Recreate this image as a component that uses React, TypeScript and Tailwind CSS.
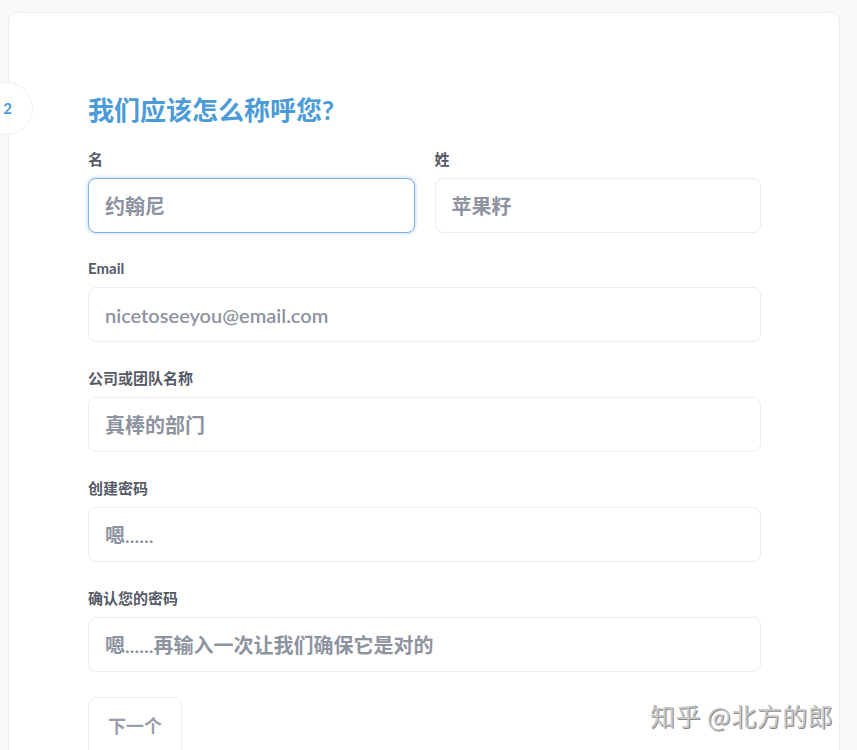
import React from "react";

const font = { fontFamily: 'Lato, "Noto Sans CJK SC", "Noto Sans", sans-serif' };

function Field({ label, placeholder, focused = false }: { label: string; placeholder: string; focused?: boolean }) {
  return (
    <div className="flex flex-col gap-[9px]">
      <label className="text-[15px] leading-[20px] font-bold text-[#555a66]">{label}</label>
      <div
        className={
          "h-[55px] rounded-[8px] bg-white flex items-center px-[16px] " +
          (focused
            ? "border-[1.5px] border-[#7db2e6] shadow-[0_0_4px_rgba(74,151,217,0.45)]"
            : "border border-[#ebedf0]")
        }
      >
        <span className="text-[20px] font-semibold text-[#8e93a0]">{placeholder}</span>
      </div>
    </div>
  );
}

export default function App() {
  return (
    <div className="relative h-[750px] w-[857px] overflow-hidden bg-[#f7f8fa]" style={font}>
      <div className="relative ml-[8px] mt-[12px] w-[832px] h-[760px] rounded-t-[10px] border border-[#eceef1] bg-white">
        <div className="absolute left-[-29px] top-[69px] w-[53px] h-[53px] rounded-full border border-[#eceef1] bg-white flex items-center justify-center pl-[2px]">
          <span className="text-[15px] font-bold text-[#4b9bd8]">2</span>
        </div>
        <div className="pl-[79px] pr-[78px] pt-[81px] flex flex-col">
          <h1 className="text-[26px] leading-[32px] font-bold text-[#4b9bd8]">我们应该怎么称呼您?</h1>
          <div className="mt-[23px] grid grid-cols-2 gap-[20px]">
            <Field label="名" placeholder="约翰尼" focused />
            <Field label="姓" placeholder="苹果籽" />
          </div>
          <div className="mt-[25px] flex flex-col gap-[26px]">
            <Field label="Email" placeholder="nicetoseeyou@email.com" />
            <Field label="公司或团队名称" placeholder="真棒的部门" />
            <Field label="创建密码" placeholder="嗯......" />
            <Field label="确认您的密码" placeholder="嗯......再输入一次让我们确保它是对的" />
          </div>
          <div className="mt-[25px]">
            <button className="w-[94px] h-[60px] rounded-[8px] border border-[#eceef1] bg-white pb-[2px] text-[18px] font-semibold text-[#9a9ea9]">
              下一个
            </button>
          </div>
        </div>
      </div>
      <div
        className="absolute left-[650px] top-[700px] text-[25px] leading-[30px] text-[#c8c8c8] tracking-[0.5px]"
        style={{ fontFamily: '"Noto Sans CJK SC", sans-serif', textShadow: "1px 1px 0 #8a8a8a" }}
      >
        知乎 @北方的郎
      </div>
    </div>
  );
}
